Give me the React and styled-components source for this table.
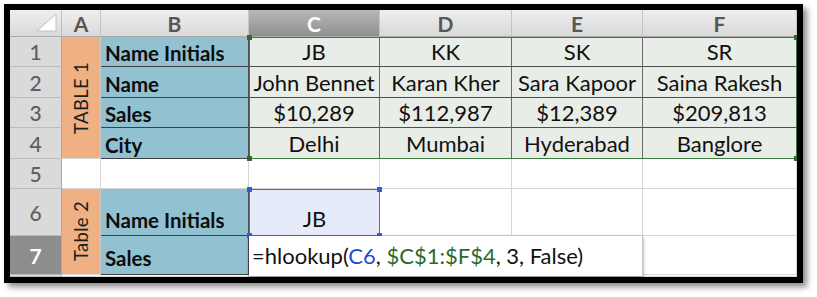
import React from "react";
import styled, { createGlobalStyle, css } from "styled-components";

const Global = createGlobalStyle`
  html, body { margin: 0; padding: 0; background: #ffffff; }
  body { font-family: "Lato", "Open Sans", sans-serif; }
`;

const Page = styled.div`
  padding: 4px;
  width: 817px;
  height: 297px;
  box-sizing: border-box;
`;

const Frame = styled.div`
  display: inline-block;
  border: 6px solid #000;
  box-shadow: 4px 4px 6px rgba(0, 0, 0, 0.45);
  background: #fff;
`;

const Sheet = styled.div`
  position: relative;
  display: grid;
  grid-template-columns: 52px 39px 148px 131px 132px 131px 154px;
  grid-template-rows: 27px 30px 31px 30px 31px 30px 47px 39px 2px;
  width: 787px;
  height: 267px;
  overflow: hidden;
  font-family: "Lato", "Open Sans", sans-serif;
  color: #111;
`;

const base = css`
  box-sizing: border-box;
  display: flex;
  min-width: 0;
  overflow: hidden;
  white-space: nowrap;
`;

const Corner = styled.div`
  ${base};
  background: linear-gradient(#efefef, #d9d9d9);
  border-right: 1px solid #bdbdbd;
  border-bottom: 1px solid #aaaaaa;
  align-items: flex-end;
  justify-content: flex-end;
  padding: 0 4px 4px 0;
`;

const ColHead = styled.div`
  ${base};
  align-items: center;
  justify-content: center;
  font-weight: 700;
  font-size: 21px;
  padding-top: 1px;
  border-right: 1px solid #c4c4c4;
  border-bottom: 1px solid #aaaaaa;
  background: ${(p) =>
    p.$selected
      ? "linear-gradient(#b8b8b8, #8f8f8f)"
      : "linear-gradient(#efefef, #d9d9d9)"};
  color: ${(p) => (p.$selected ? "#ffffff" : "#575757")};
`;

const RowHead = styled.div`
  ${base};
  align-items: center;
  justify-content: center;
  font-size: 21px;
  border-right: 1px solid #a9a9a9;
  border-bottom: 1px solid #bcbcbc;
  background: ${(p) => (p.$selected ? "#8d8d8d" : "#dadada")};
  color: ${(p) => (p.$selected ? "#ffffff" : "#5e5e5e")};
  font-weight: ${(p) => (p.$selected ? 700 : 500)};
`;

const TableTag = styled.div`
  ${base};
  grid-row: span ${(p) => p.$span};
  background: #efb183;
  border-right: 1px solid #c9c9c9;
  border-bottom: 1px solid #d9d9d9;
  align-items: center;
  justify-content: center;
  span {
    writing-mode: vertical-rl;
    transform: rotate(180deg);
    font-size: 18.5px;
    color: #1e1e1e;
    letter-spacing: 0.3px;
  }
`;

const Label = styled.div`
  ${base};
  background: #92c1d2;
  border-right: 1px solid #4f4f4f;
  border-bottom: 1px solid #404040;
  align-items: flex-end;
  padding: 0 0 ${(p) => p.$pb ?? 1}px 4px;
  font-weight: 700;
  font-size: 20.5px;
  color: #0d0d0d;
`;

const Data = styled.div`
  ${base};
  background: #e8ede7;
  border-right: 1px solid #6a6a6a;
  border-bottom: 1px solid #4e4e4e;
  align-items: flex-end;
  justify-content: center;
  padding-bottom: 1px;
  font-size: 22px;
  color: #111;
`;

const Empty = styled.div`
  ${base};
  background: ${(p) => p.$bg || "#ffffff"};
  border-right: 1px solid #d6d6d6;
  border-bottom: 1px solid #d6d6d6;
`;

const Active = styled.div`
  ${base};
  position: relative;
  overflow: visible;
  background: #e5ebf8;
  border: 1px solid #3b6fd6;
  align-items: flex-end;
  justify-content: center;
  padding-bottom: 3px;
  font-size: 22px;
  color: #111;
`;

const Handle = styled.i`
  position: absolute;
  width: 5px;
  height: 5px;
  background: ${(p) => p.$color};
  ${(p) => (p.$top ? "top: -3px;" : "bottom: -3px;")}
  ${(p) => (p.$left ? "left: -3px;" : "right: -3px;")}
`;

const Editor = styled.div`
  ${base};
  grid-column: span 3;
  position: relative;
  z-index: 2;
  height: 40px;
  background: #ffffff;
  border-right: 1px solid #c8c8c8;
  box-shadow: 0 1px 3px rgba(0, 0, 0, 0.45);
  align-items: center;
  padding: 0 0 2px 3px;
  font-size: 22px;
  color: #111;
`;

const Formula = styled.span`
  display: block;
  white-space: pre;
`;

const Ref = styled.span`
  color: ${(p) => p.$c};
`;

const Outline = styled.div`
  position: absolute;
  left: 239px;
  top: 27px;
  width: 548px;
  height: 122px;
  box-sizing: border-box;
  border: 1px solid #3d7a3d;
  pointer-events: none;
  z-index: 1;
`;

const Triangle = () => (
  <svg width="20" height="18" viewBox="0 0 20 18">
    <path d="M19 0 L19 17 L0 17 Z" fill="#ffffff" stroke="#b5b5b5" strokeWidth="0.8" />
  </svg>
);

const cols = ["A", "B", "C", "D", "E", "F"];
const table = [
  ["Name Initials", "JB", "KK", "SK", "SR"],
  ["Name", "John Bennet", "Karan Kher", "Sara Kapoor", "Saina Rakesh"],
  ["Sales", "$10,289", "$112,987", "$12,389", "$209,813"],
  ["City", "Delhi", "Mumbai", "Hyderabad", "Banglore"],
];

export default function App() {
  return (
    <Page>
      <Global />
      <Frame>
        <Sheet>
          <Corner>
            <Triangle />
          </Corner>
          {cols.map((c) => (
            <ColHead key={c} $selected={c === "C"}>
              {c}
            </ColHead>
          ))}

          {table.map((row, i) => (
            <React.Fragment key={i}>
              <RowHead>{i + 1}</RowHead>
              {i === 0 && (
                <TableTag $span={4}>
                  <span>TABLE 1</span>
                </TableTag>
              )}
              <Label>{row[0]}</Label>
              {row.slice(1).map((v, j) => (
                <Data key={j}>{v}</Data>
              ))}
            </React.Fragment>
          ))}

          <RowHead>5</RowHead>
          <Empty />
          <Empty />
          <Empty />
          <Empty />
          <Empty />
          <Empty />

          <RowHead>6</RowHead>
          <TableTag $span={2}>
            <span>Table 2</span>
          </TableTag>
          <Label $pb={3}>Name Initials</Label>
          <Active>
            JB
            <Handle $color="#2f5fd0" $top $left />
            <Handle $color="#2f5fd0" $top />
            <Handle $color="#2f5fd0" $left />
            <Handle $color="#2f5fd0" />
          </Active>
          <Empty />
          <Empty />
          <Empty />

          <RowHead $selected>7</RowHead>
          <Label $pb={4}>Sales</Label>
          <Editor>
            <Formula>
              {"=hlookup("}
              <Ref $c="#1f4fcf">C6</Ref>
              {", "}
              <Ref $c="#2c6a2c">$C$1:$F$4</Ref>
              {", 3, False)"}
            </Formula>
          </Editor>
          <Empty />

          <RowHead />
          <Empty />
          <Empty />
          <Empty />
          <Empty />
          <Empty />
          <Empty />

          <Outline>
            <Handle $color="#2e6b2e" $top $left />
            <Handle $color="#2e6b2e" $top />
            <Handle $color="#2e6b2e" $left />
            <Handle $color="#2e6b2e" />
          </Outline>
        </Sheet>
      </Frame>
    </Page>
  );
}
